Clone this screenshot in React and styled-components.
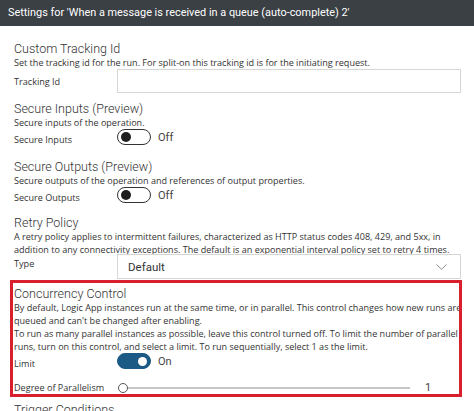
import React from 'react';
import styled, { createGlobalStyle } from 'styled-components';

const Global = createGlobalStyle`
  html, body { margin: 0; padding: 0; background: #fff; }
  body {
    font-family: Roboto, "Liberation Sans", sans-serif;
    color: #333;
    overflow: hidden;
  }
`

const Page = styled.div`
  width: 474px;
  height: 411px;
  overflow: hidden;
  background: #fff;
`

const Header = styled.div`
  height: 26px;
  line-height: 26px;
  background: #3b4045;
  color: #fff;
  font-family: Roboto, sans-serif;
  font-size: 10.9px;
  padding: 0 8px;
  white-space: nowrap;
`

const Body = styled.div`
  padding: 12px 13px 0 14px;
`

const Section = styled.div`
  margin-bottom: ${p => p.$gap ?? 5}px;
`

const Title = styled.div`
  font-family: Roboto, sans-serif;
  font-size: 12.5px;
  line-height: 15px;
  padding-top: 3px;
  font-weight: 300;
  color: #333;
  white-space: nowrap;
  margin-top: ${p => p.$offset || 0}px;
`

const Desc = styled.div`
  font-family: "Open Sans", "Noto Sans", sans-serif;
  font-size: 9.05px;
  line-height: 13px;
  color: #333;
  margin-right: ${p => p.$wide ? -4 : 0}px;
`

const Row = styled.div`
  display: grid;
  grid-template-columns: 103px 1fr;
  align-items: ${p => p.$align || 'center'};
  height: ${p => p.$h || 20}px;
  margin-top: ${p => p.$pull ? -p.$pull : 0}px;
`

const Label = styled.div`
  font-family: "Open Sans", "Noto Sans", sans-serif;
  font-size: 9.1px;
  color: #333;
  white-space: nowrap;
  padding-top: ${p => p.$drop || 0}px;
`

const TextBox = styled.div`
  height: 24px;
  border: 1px solid #d6d6d6;
  box-sizing: border-box;
`

const Select = styled.div`
  height: 25px;
  border: 1px solid #d6d6d6;
  box-sizing: border-box;
  display: flex;
  align-items: center;
  justify-content: space-between;
  padding: 1px 13px 0 10px;
  font-size: 11.5px;
  color: #333;
`

const ToggleWrap = styled.div`
  display: flex;
  align-items: center;
  gap: 7px;
  font-size: 11px;
  color: #444;
`

const Switch = styled.div`
  width: 34px;
  height: 16px;
  box-sizing: border-box;
  border-radius: 8px;
  border: 1px solid ${p => p.$on ? '#1b5a85' : '#333'};
  background: ${p => p.$on ? '#1b5a85' : '#fff'};
  display: flex;
  align-items: center;
  justify-content: ${p => p.$on ? 'flex-end' : 'flex-start'};
  padding: 0 3px;
`

const Knob = styled.div`
  width: ${p => p.$on ? 9 : 10}px;
  height: ${p => p.$on ? 9 : 10}px;
  border-radius: 50%;
  background: ${p => p.$on ? '#fff' : '#1e1e1e'};
`

const Highlight = styled.div`
  outline: 3px solid #d8202c;
  margin: 8px 2px 0 -1px;
  padding-left: 1px;
  height: 111px;
`

const SliderWrap = styled.div`
  display: flex;
  align-items: center;
  height: 20px;
`

const Thumb = styled.div`
  width: 10px;
  height: 10px;
  box-sizing: border-box;
  border-radius: 50%;
  border: 1.5px solid #555;
  background: #fff;
  margin-left: 1px;
  flex: none;
`

const Track = styled.div`
  flex: 1;
  height: 2px;
  background: #c6c6c6;
`

const Value = styled.div`
  width: 34px;
  margin-left: 15px;
  font-size: 11px;
  color: #444;
`

const Chevron = () => (
  <svg width="11" height="6" viewBox="0 0 11 6" fill="none">
    <path d="M0.5 0.5 L5.5 5.3 L10.5 0.5" stroke="#8a8a8a" strokeWidth="1" />
  </svg>
)

const Toggle = ({ on }) => (
  <ToggleWrap>
    <Switch $on={on}><Knob $on={on} /></Switch>
    {on ? 'On' : 'Off'}
  </ToggleWrap>
)

export default function App() {
  return (
    <Page>
      <Global />
      <Header>Settings for 'When a message is received in a queue (auto-complete) 2'</Header>
      <Body>
        <Section>
          <Title>Custom Tracking Id</Title>
          <Desc>Set the tracking id for the run. For split-on this tracking id is for the initiating request.</Desc>
          <Row $h={24}>
            <Label>Tracking Id</Label>
            <TextBox />
          </Row>
        </Section>
        <Section $gap={7}>
          <Title>Secure Inputs (Preview)</Title>
          <Desc>Secure inputs of the operation.</Desc>
          <Row $align="start">
            <Label $drop={4}>Secure Inputs</Label>
            <Toggle on={false} />
          </Row>
        </Section>
        <Section $gap={5}>
          <Title>Secure Outputs (Preview)</Title>
          <Desc>Secure outputs of the operation and references of output properties.</Desc>
          <Row $align="start">
            <Label $drop={4}>Secure Outputs</Label>
            <Toggle on={false} />
          </Row>
        </Section>
        <Section>
          <Title>Retry Policy</Title>
          <Desc>A retry policy applies to intermittent failures, characterized as HTTP status codes 408, 429, and 5xx, in addition to any connectivity exceptions. The default is an exponential interval policy set to retry 4 times.</Desc>
          <Row $h={25} $align="start" $pull={2}>
            <Label $drop={3}>Type</Label>
            <Select>
              Default
              <Chevron />
            </Select>
          </Row>
        </Section>
        <Highlight>
          <Title $offset={-4}>Concurrency Control</Title>
          <Desc $wide>By default, Logic App instances run at the same time, or in parallel. This control changes how new runs are queued and can't be changed after enabling.</Desc>
          <Desc $wide>To run as many parallel instances as possible, leave this control turned off. To limit the number of parallel runs, turn on this control, and select a limit. To run sequentially, select 1 as the limit.</Desc>
          <Row $h={24} $align="start">
            <Label $drop={4}>Limit</Label>
            <Toggle on />
          </Row>
          <Row $h={21}>
            <Label>Degree of Parallelism</Label>
            <SliderWrap>
              <Thumb />
              <Track />
              <Value>1</Value>
            </SliderWrap>
          </Row>
        </Highlight>
        <Section $gap={0}>
          <Title $offset={5}>Trigger Conditions</Title>
        </Section>
      </Body>
    </Page>
  )
}
